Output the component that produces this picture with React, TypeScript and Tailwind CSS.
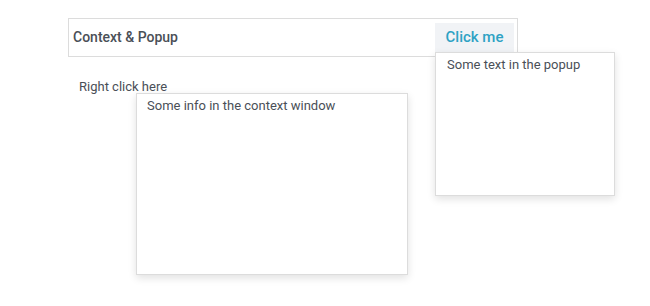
export default function App() {
  return (
    <main className="min-h-screen bg-white pl-[68px] pt-[18px] font-['Roboto',sans-serif] text-[#4a4f57]">
      <div className="relative w-[450px]">
        <div className="flex h-[39px] items-center justify-between border border-[#dcdcdc] pl-[4px] pr-[3px]">
          <span className="text-[14px] font-medium">Context &amp; Popup</span>
          <button className="h-[29px] w-[79px] bg-[#f1f3f6] text-[15px] font-medium text-[#2ea2c4]">
            Click me
          </button>
        </div>

        <div className="absolute left-[367px] top-[34px] h-[144px] w-[180px] border border-[#dcdcdc] bg-white px-[11px] py-[2px] text-[13px] shadow-[0_3px_8px_rgba(0,0,0,0.12)]">
          Some text in the popup
        </div>

        <div className="relative pl-[11px] pt-[22px]">
          <p className="text-[13px] leading-[16px]">Right click here</p>
          <div className="absolute left-[68px] top-[36px] h-[182px] w-[272px] border border-[#dcdcdc] bg-white px-[10px] py-[2px] text-[13px] shadow-[0_3px_8px_rgba(0,0,0,0.12)]">
            Some info in the context window
          </div>
        </div>
      </div>
    </main>
  );
}
